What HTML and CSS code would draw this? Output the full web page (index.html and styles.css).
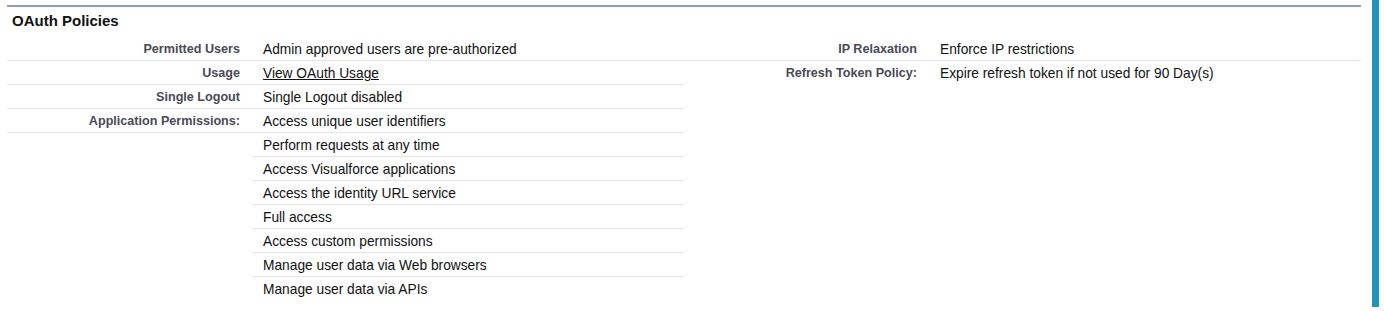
FILE: index.html
```html
<!DOCTYPE html>
<html lang="en">
<head>
<meta charset="utf-8">
<title>OAuth Policies</title>
<link rel="stylesheet" href="styles.css">
</head>
<body>
<div class="page">
  <section class="section">
    <h3 class="section-title">OAuth Policies</h3>
    <div class="columns">
      <div class="col">
        <div class="row"><div class="label">Permitted Users</div><div class="data">Admin approved users are pre-authorized</div></div>
        <div class="row"><div class="label">Usage</div><div class="data"><a class="link" href="#">View OAuth Usage</a></div></div>
        <div class="row"><div class="label">Single Logout</div><div class="data">Single Logout disabled</div></div>
        <div class="row"><div class="label">Application Permissions:</div><div class="data">Access unique user identifiers</div></div>
        <div class="row sub"><div class="label"></div><div class="data">Perform requests at any time</div></div>
        <div class="row sub"><div class="label"></div><div class="data">Access Visualforce applications</div></div>
        <div class="row sub"><div class="label"></div><div class="data">Access the identity URL service</div></div>
        <div class="row sub"><div class="label"></div><div class="data">Full access</div></div>
        <div class="row sub"><div class="label"></div><div class="data">Access custom permissions</div></div>
        <div class="row sub"><div class="label"></div><div class="data">Manage user data via Web browsers</div></div>
        <div class="row sub last"><div class="label"></div><div class="data">Manage user data via APIs</div></div>
      </div>
      <div class="col">
        <div class="row"><div class="label">IP Relaxation</div><div class="data">Enforce IP restrictions</div></div>
        <div class="row last"><div class="label">Refresh Token Policy:</div><div class="data">Expire refresh token if not used for 90 Day(s)</div></div>
      </div>
    </div>
  </section>
  <div class="sidebar"></div>
</div>
</body>
</html>
```
FILE: styles.css
```css
html, body {
  margin: 0;
  padding: 0;
  background: #fff;
}
body {
  font-family: "Liberation Sans", Arial, sans-serif;
  color: #000;
}
.page {
  display: flex;
  align-items: flex-start;
}
.section {
  margin-left: 7px;
  margin-top: 5px;
  width: 1354px;
  border-top: 2px solid #8c9cc0;
}
.section-title {
  margin: 0;
  padding: 0 5px;
  height: 30px;
  line-height: 27px;
  font-size: 15px;
  font-weight: bold;
  color: #111;
}
.columns {
  display: grid;
  grid-template-columns: 1fr 1fr;
}
.col {
  display: flex;
  flex-direction: column;
}
.row {
  display: flex;
}
.label, .data {
  box-sizing: border-box;
  height: 24px;
  padding: 5px 11px 3px 12px;
  line-height: 15px;
  border-bottom: 1px solid #e6e6e6;
  white-space: nowrap;
}
.label {
  width: 244px;
  flex: none;
  text-align: right;
  font-size: 12.6px;
  font-weight: bold;
  color: #4a4a56;
}
.data {
  flex: 1;
  font-size: 13.75px;
  color: #111;
}
.row.sub .label {
  border-bottom-color: transparent;
}
.row.last .label, .row.last .data {
  border-bottom-color: transparent;
}
.link {
  color: #111;
  text-decoration: underline;
}
.sidebar {
  margin-left: 11px;
  width: 7px;
  height: 307px;
  background: #1e95c0;
}
```
